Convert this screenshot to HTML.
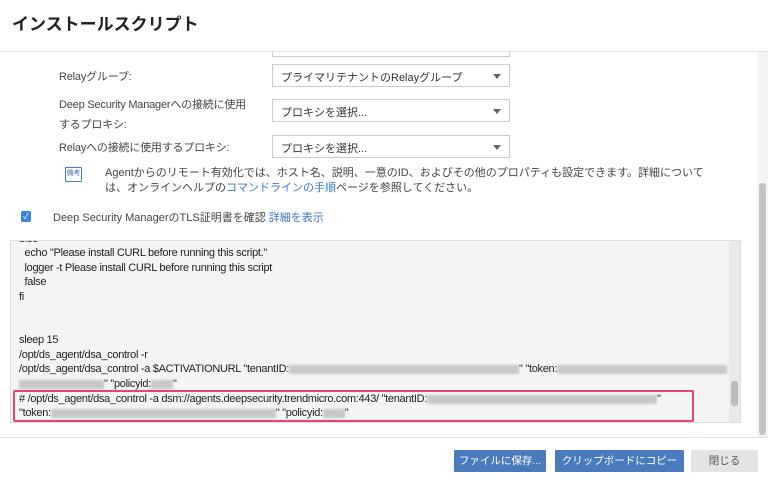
<!DOCTYPE html>
<html><head><meta charset="utf-8"><style>
*{margin:0;padding:0;box-sizing:border-box}
body{width:768px;height:479px;background:#fff;font-family:"Liberation Sans","Noto Sans CJK JP",sans-serif;color:#333;position:relative;overflow:hidden;font-size:11px}
.abs{position:absolute;white-space:nowrap}
.sel{position:absolute;left:272px;width:238px;height:23px;border:1px solid #ccc;background:#fff;font-size:11px;padding:4px 0 0 8px;color:#333}
.sel.a:after{content:"";position:absolute;right:8px;top:9px;border-left:4px solid transparent;border-right:4px solid transparent;border-top:5px solid #666}
.lbl{position:absolute;left:59px;font-size:11px;color:#444;letter-spacing:-0.2px}
.code{position:absolute;left:10px;top:240px;width:731px;height:183px;background:#f4f4f4;border:1px solid #ddd;overflow:hidden}
.code div{position:absolute;left:8px;font-size:11px;color:#222;white-space:nowrap;letter-spacing:-0.3px}
.blur{display:inline-block;height:9px;background:#c8c8c8;vertical-align:middle;filter:blur(1px)}
.btn{position:absolute;top:450px;height:22px;background:#4a7bbd;color:#fff;font-size:10.5px;text-align:center;line-height:22px;border-radius:1px}
</style></head><body>
<div class="sel" style="top:40px;height:17px"></div>
<div class="abs" style="left:0;top:0;width:768px;height:51px;background:#fff"></div>
<div class="abs" style="left:12px;top:10px;font-size:17px;font-weight:bold;color:#222">インストールスクリプト</div>
<div class="abs" style="left:0;top:51px;width:768px;height:1px;background:#e0e0e0"></div>
<div class="abs" style="left:757px;top:52px;width:11px;height:385px;background:#f4f4f4"></div>
<div class="abs" style="left:759px;top:183px;width:7px;height:252px;background:#c4c4c4;border-radius:3px"></div>
<div class="lbl" style="top:68px">Relayグループ:</div>
<div class="sel a" style="top:64px">プライマリテナントのRelayグループ</div>
<div class="lbl" style="top:95px;line-height:20px">Deep Security Managerへの接続に使用<br>するプロキシ:</div>
<div class="sel a" style="top:99px">プロキシを選択...</div>
<div class="lbl" style="top:139px">Relayへの接続に使用するプロキシ:</div>
<div class="sel a" style="top:135px">プロキシを選択...</div>
<div class="abs" style="left:65px;top:167px;width:17px;height:15px;border:1.5px solid #4a7bbd;font-size:7px;color:#4a7bbd;text-align:center;line-height:12px;border-radius:1px">備考</div>
<div class="abs" style="left:105px;top:166px;font-size:11px;line-height:15px;color:#444">Agentからのリモート有効化では、ホスト名、説明、一意のID、およびその他のプロパティも設定できます。詳細について<br>は、オンラインヘルプの<span style="color:#3a78c3">コマンドラインの手順</span>ページを参照してください。</div>
<div class="abs" style="left:21px;top:211px;width:10px;height:11px;background:#3b82e0;border-radius:2px;color:#fff;font-size:8px;text-align:center;line-height:11px">✓</div>
<div class="abs" style="left:53px;top:209px;font-size:11px;color:#444">Deep Security ManagerのTLS証明書を確認 <span style="color:#3a78c3">詳細を表示</span></div>
<div class="code">
<div style="top:-8px">else</div>
<div style="top:6px">&nbsp; echo "Please install CURL before running this script."</div>
<div style="top:21px">&nbsp; logger -t Please install CURL before running this script</div>
<div style="top:35px">&nbsp; false</div>
<div style="top:50px">fi</div>
<div style="top:93px">sleep 15</div>
<div style="top:108px">/opt/ds_agent/dsa_control -r</div>
<div style="top:122px">/opt/ds_agent/dsa_control -a $ACTIVATIONURL "tenantID:<span class="blur" style="width:230px"></span>" "token:<span class="blur" style="width:170px"></span></div>
<div style="top:137px"><span class="blur" style="width:85px"></span>" "policyid:<span class="blur" style="width:22px"></span>"</div>
<div style="top:152px"># /opt/ds_agent/dsa_control -a dsm://agents.deepsecurity.trendmicro.com:443/ "tenantID:<span class="blur" style="width:230px"></span>"</div>
<div style="top:166px">"token:<span class="blur" style="width:225px"></span>" "policyid:<span class="blur" style="width:22px"></span>"</div>
<div style="left:2px;top:149px;width:681px;height:32px;border:2px solid #e0457b;border-radius:2px"></div>
<div style="left:718px;top:0;width:11px;height:181px;background:#eaeaea"></div>
<div style="left:720px;top:140px;width:7px;height:25px;background:#bbb;border-radius:3px"></div>
</div>
<div class="abs" style="left:0;top:437px;width:768px;height:1px;background:#e0e0e0"></div>
<div class="btn" style="left:454px;width:92px">ファイルに保存...</div>
<div class="btn" style="left:555px;width:129px">クリップボードにコピー</div>
<div class="btn" style="left:691px;width:67px;background:#e4e4e4;color:#555">閉じる</div>
</body></html>
